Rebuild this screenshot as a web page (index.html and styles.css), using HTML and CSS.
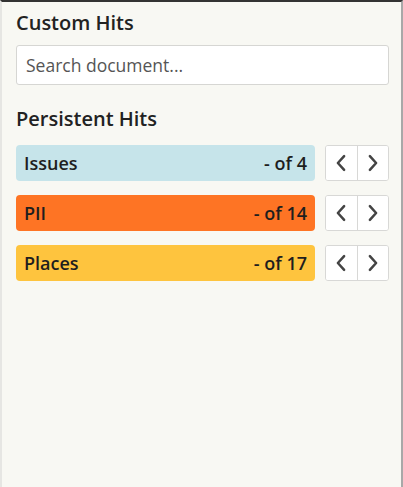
FILE: index.html
```html
<!DOCTYPE html>
<html>
<head>
<meta charset="utf-8">
<link rel="stylesheet" href="styles.css">
</head>
<body>
<div class="panel">
  <h2 class="title">Custom Hits</h2>
  <input class="search" type="text" placeholder="Search document...">
  <h2 class="title persistent">Persistent Hits</h2>
  <div class="rows">
    <div class="row">
      <div class="hit issues"><span>Issues</span><span>- of 4</span></div>
      <div class="nav">
        <button class="btn"><svg viewBox="0 0 16 16"><path d="M10.5 2.5 L5.5 8 L10.5 13.5"/></svg></button>
        <button class="btn"><svg viewBox="0 0 16 16"><path d="M5.5 2.5 L10.5 8 L5.5 13.5"/></svg></button>
      </div>
    </div>
    <div class="row">
      <div class="hit pii"><span>PII</span><span>- of 14</span></div>
      <div class="nav">
        <button class="btn"><svg viewBox="0 0 16 16"><path d="M10.5 2.5 L5.5 8 L10.5 13.5"/></svg></button>
        <button class="btn"><svg viewBox="0 0 16 16"><path d="M5.5 2.5 L10.5 8 L5.5 13.5"/></svg></button>
      </div>
    </div>
    <div class="row">
      <div class="hit places"><span>Places</span><span>- of 17</span></div>
      <div class="nav">
        <button class="btn"><svg viewBox="0 0 16 16"><path d="M10.5 2.5 L5.5 8 L10.5 13.5"/></svg></button>
        <button class="btn"><svg viewBox="0 0 16 16"><path d="M5.5 2.5 L10.5 8 L5.5 13.5"/></svg></button>
      </div>
    </div>
  </div>
</div>
</body>
</html>
```
FILE: styles.css
```css
html, body {
  margin: 0;
  padding: 0;
  height: 100%;
}
body {
  font-family: "Open Sans", "Noto Sans", sans-serif;
  color: #222;
  background: #f8f8f3;
}
.panel {
  box-sizing: border-box;
  height: 487px;
  border-top: 2px solid #333;
  border-left: 2px solid #e6e6e3;
  border-right: 2px solid #a8a8a8;
  padding: 7px 12px 0 14px;
  background: #f8f8f3;
}
.title {
  margin: 0;
  font-size: 20px;
  font-weight: 600;
  line-height: 27px;
  color: #222;
}
.search {
  display: block;
  box-sizing: border-box;
  width: 100%;
  height: 40px;
  margin-top: 9px;
  padding: 0 9px;
  border: 1.5px solid #d6d6d3;
  border-radius: 3px;
  background: #fff;
  font-family: "Open Sans", sans-serif;
  font-size: 17.5px;
  color: #333;
  outline: none;
}
.search::placeholder {
  color: #555;
}
.persistent {
  margin-top: 20px;
}
.rows {
  display: flex;
  flex-direction: column;
  gap: 14px;
  margin-top: 13px;
}
.row {
  display: flex;
  gap: 10px;
  height: 36px;
}
.hit {
  flex: 1;
  display: flex;
  justify-content: space-between;
  align-items: center;
  padding: 0 8px;
  border-radius: 4px;
  font-size: 18px;
  font-weight: 600;
  color: #1e1e1e;
}
.issues { background: #c6e4ea; }
.pii { background: #fe7424; }
.places { background: #fec43e; }
.nav {
  display: flex;
  width: 64px;
  box-sizing: border-box;
  border: 1.5px solid #d8d8d6;
  border-radius: 3px;
  background: #fff;
  overflow: hidden;
}
.btn {
  flex: 1;
  margin: 0;
  padding: 0;
  border: none;
  background: #fff;
  display: flex;
  align-items: center;
  justify-content: center;
}
.btn + .btn {
  border-left: 1.5px solid #d8d8d6;
}
.btn svg {
  width: 20px;
  height: 20px;
  fill: none;
  stroke: #444;
  stroke-width: 2;
  stroke-linecap: round;
  stroke-linejoin: round;
}
```
